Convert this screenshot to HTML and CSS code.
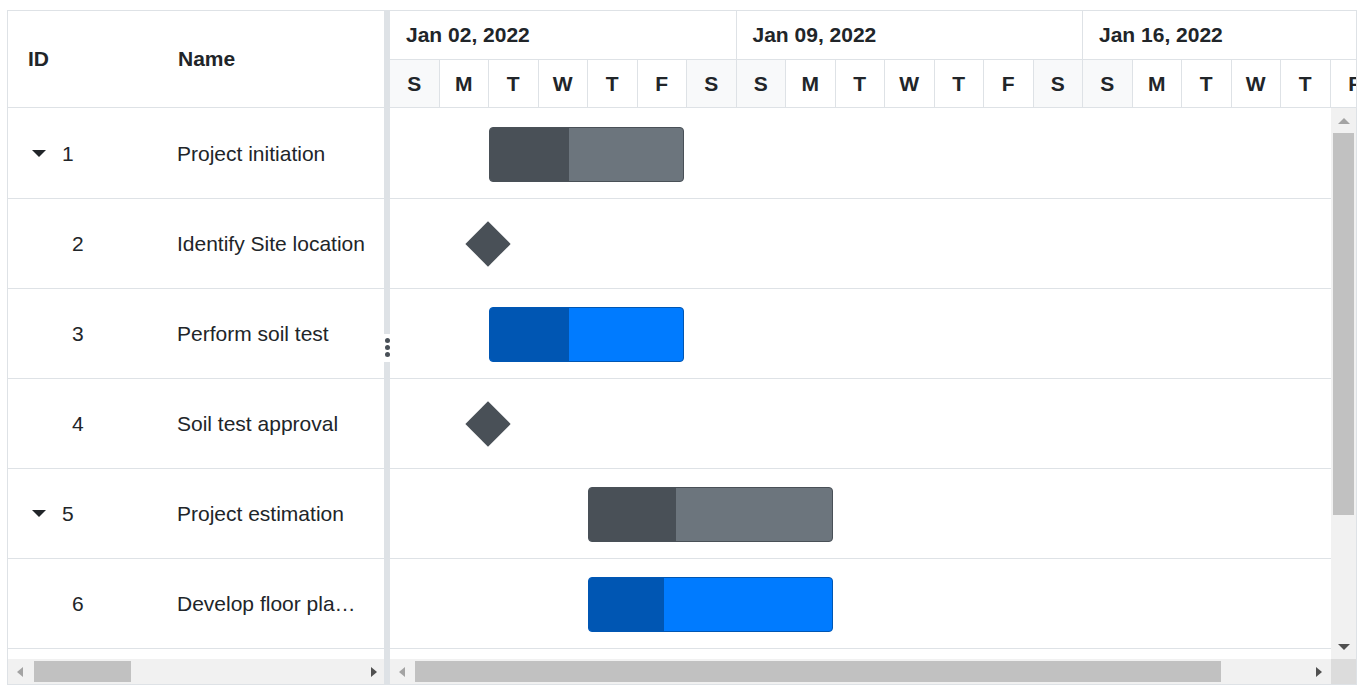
FILE: index.html
```html
<!DOCTYPE html>
<html lang="en">

<head>
  <meta charset="UTF-8" />
  <meta name="viewport" content="width=device-width, initial-scale=1.0" />
  <title>Project Gantt</title>
  <link rel="stylesheet" href="styles.css">
</head>

<body>
  <div class="gantt">
    <!-- tree grid -->
    <div class="grid">
      <div class="grid-head">
        <div class="col-id">ID</div>
        <div class="col-name">Name</div>
      </div>
      <div class="grid-body">
        <div class="row">
          <div class="cell-id parent"><span class="caret"></span>1</div>
          <div class="cell-name">Project initiation</div>
        </div>
        <div class="row">
          <div class="cell-id child">2</div>
          <div class="cell-name">Identify Site location</div>
        </div>
        <div class="row">
          <div class="cell-id child">3</div>
          <div class="cell-name">Perform soil test</div>
        </div>
        <div class="row">
          <div class="cell-id child">4</div>
          <div class="cell-name">Soil test approval</div>
        </div>
        <div class="row">
          <div class="cell-id parent"><span class="caret"></span>5</div>
          <div class="cell-name">Project estimation</div>
        </div>
        <div class="row">
          <div class="cell-id child">6</div>
          <div class="cell-name">Develop floor plan for estimation</div>
        </div>
      </div>
      <div class="hscroll grid-scroll">
        <span class="arrow-left"></span>
        <span class="thumb"></span>
        <span class="spacer"></span>
        <span class="arrow-right"></span>
      </div>
    </div>

    <div class="splitter">
      <div class="grip">
        <span class="dot"></span>
        <span class="dot"></span>
        <span class="dot"></span>
      </div>
    </div>

    <!-- chart side -->
    <div class="chart">
      <div class="timeline">
        <div class="weeks">
          <div class="week">Jan 02, 2022</div>
          <div class="week">Jan 09, 2022</div>
          <div class="week">Jan 16, 2022</div>
        </div>
        <div class="days">
          <div class="day weekend">S</div>
          <div class="day">M</div>
          <div class="day">T</div>
          <div class="day">W</div>
          <div class="day">T</div>
          <div class="day">F</div>
          <div class="day weekend">S</div>
          <div class="day weekend">S</div>
          <div class="day">M</div>
          <div class="day">T</div>
          <div class="day">W</div>
          <div class="day">T</div>
          <div class="day">F</div>
          <div class="day weekend">S</div>
          <div class="day weekend">S</div>
          <div class="day">M</div>
          <div class="day">T</div>
          <div class="day">W</div>
          <div class="day">T</div>
          <div class="day">F</div>
          <div class="day weekend">S</div>
        </div>
      </div>

      <div class="chart-body">
        <div class="chart-rows">
          <div class="chart-row">
            <div class="bar parent-bar" style="margin-left: 99px; width: 195px;">
              <div class="progress" style="width: 79px;"></div>
            </div>
          </div>
          <div class="chart-row">
            <div class="milestone" style="margin-left: 82px;"></div>
          </div>
          <div class="chart-row">
            <div class="bar task-bar" style="margin-left: 99px; width: 195px;">
              <div class="progress" style="width: 79px;"></div>
            </div>
          </div>
          <div class="chart-row">
            <div class="milestone" style="margin-left: 82px;"></div>
          </div>
          <div class="chart-row">
            <div class="bar parent-bar" style="margin-left: 198px; width: 245px;">
              <div class="progress" style="width: 87px;"></div>
            </div>
          </div>
          <div class="chart-row">
            <div class="bar task-bar" style="margin-left: 198px; width: 245px;">
              <div class="progress" style="width: 75px;"></div>
            </div>
          </div>
        </div>
        <div class="vscroll">
          <span class="arrow-up"></span>
          <span class="vthumb"></span>
          <span class="spacer"></span>
          <span class="arrow-down"></span>
        </div>
      </div>

      <div class="chart-foot">
        <div class="hscroll chart-scroll">
          <span class="arrow-left"></span>
          <span class="thumb"></span>
          <span class="spacer"></span>
          <span class="arrow-right"></span>
        </div>
        <div class="corner"></div>
      </div>
    </div>
  </div>
</body>

</html>
```

FILE: styles.css
```css
* {
  box-sizing: border-box;
  margin: 0;
  padding: 0;
}

body {
  padding: 10px 0 0 7px;
  font-family: 'Liberation Sans', Arial, Helvetica, sans-serif;
  color: #212529;
  background-color: #fff;
}

.gantt {
  display: flex;
  width: 1350px;
  height: 675px;
  border: 1px solid #dee2e6;
  overflow: hidden;
}

/* tree grid */

.grid {
  width: 376px;
  flex-shrink: 0;
  display: flex;
  flex-direction: column;
}

.grid-head {
  height: 97px;
  flex-shrink: 0;
  display: flex;
  align-items: center;
  border-bottom: 1px solid #dee2e6;
  font-size: 21px;
  font-weight: bold;
}

.col-id {
  width: 150px;
  padding-left: 20px;
}

.col-name {
  padding-left: 20px;
}

.grid-body {
  flex: 1;
  overflow: hidden;
}

.row {
  height: 90px;
  display: flex;
  align-items: center;
  border-bottom: 1px solid #dee2e6;
  font-size: 21px;
}

.row:first-child,
.chart-row:first-child {
  height: 91px;
  padding-top: 1px;
}

.cell-id {
  width: 150px;
  flex-shrink: 0;
  display: flex;
  align-items: center;
}

.cell-id.parent {
  padding-left: 24px;
}

.cell-id.child {
  padding-left: 64px;
}

.caret {
  width: 0;
  height: 0;
  border-left: 7px solid transparent;
  border-right: 7px solid transparent;
  border-top: 7px solid #212529;
  margin-right: 16px;
}

.cell-name {
  width: 226px;
  padding: 0 17px 0 19px;
  white-space: nowrap;
  overflow: hidden;
  text-overflow: ellipsis;
}

/* splitter */

.splitter {
  width: 6px;
  flex-shrink: 0;
  background-color: #dee2e6;
  display: flex;
  align-items: center;
}

.grip {
  width: 6px;
  height: 28px;
  background-color: #fff;
  display: flex;
  flex-direction: column;
  align-items: center;
  justify-content: center;
  gap: 2px;
}

.dot {
  width: 5px;
  height: 5px;
  border-radius: 50%;
  background-color: #495057;
}

/* chart */

.chart {
  flex: 1;
  min-width: 0;
  display: flex;
  flex-direction: column;
}

.timeline {
  height: 97px;
  flex-shrink: 0;
  overflow: hidden;
  border-bottom: 1px solid #dee2e6;
  font-size: 21px;
  font-weight: bold;
}

.weeks {
  display: flex;
  height: 49px;
  border-bottom: 1px solid #dee2e6;
}

.week {
  width: 346.5px;
  flex-shrink: 0;
  padding-left: 16px;
  display: flex;
  align-items: center;
  border-right: 1px solid #dee2e6;
  white-space: nowrap;
}

.days {
  display: flex;
  height: 47px;
}

.day {
  width: 49.5px;
  flex-shrink: 0;
  display: flex;
  align-items: center;
  justify-content: center;
  border-right: 1px solid #dee2e6;
}

.day.weekend {
  background-color: #f8f9fa;
}

.chart-body {
  flex: 1;
  display: flex;
  min-height: 0;
}

.chart-rows {
  flex: 1;
  overflow: hidden;
}

.chart-row {
  height: 90px;
  display: flex;
  align-items: flex-start;
  border-bottom: 1px solid #dee2e6;
}

.bar {
  height: 55px;
  margin-top: 18px;
  border-radius: 4px;
  display: flex;
  overflow: hidden;
}

.progress {
  height: 100%;
}

.parent-bar {
  background-color: #6c757d;
  border: 1px solid #495057;
}

.parent-bar .progress {
  background-color: #495057;
}

.task-bar {
  background-color: #007bff;
  border: 1px solid #0056b3;
}

.task-bar .progress {
  background-color: #0056b3;
}

.milestone {
  width: 32px;
  height: 32px;
  margin-top: 29px;
  background-color: #495057;
  transform: rotate(45deg);
}

/* scrollbars */

.hscroll {
  height: 25px;
  display: flex;
  align-items: center;
  background-color: #f1f1f1;
}

.grid-scroll {
  flex-shrink: 0;
}

.chart-foot {
  height: 25px;
  flex-shrink: 0;
  display: flex;
}

.chart-scroll {
  flex: 1;
}

.corner {
  width: 25px;
  background-color: #dcdcdc;
}

.spacer {
  flex: 1;
}

.arrow-left {
  width: 0;
  height: 0;
  margin-left: 9px;
  border-top: 5px solid transparent;
  border-bottom: 5px solid transparent;
  border-right: 6px solid #a3a3a3;
}

.arrow-right {
  width: 0;
  height: 0;
  border-top: 5px solid transparent;
  border-bottom: 5px solid transparent;
  border-left: 6px solid #505050;
}

.thumb {
  height: 21px;
  background-color: #c1c1c1;
}

.grid-scroll .thumb {
  width: 97px;
  margin-left: 11px;
}

.grid-scroll .arrow-right {
  margin-right: 7px;
}

.chart-scroll .thumb {
  width: 806px;
  margin-left: 10px;
}

.chart-scroll .arrow-right {
  margin-right: 9px;
}

.vscroll {
  width: 25px;
  flex-shrink: 0;
  display: flex;
  flex-direction: column;
  align-items: center;
  background-color: #f1f1f1;
}

.arrow-up {
  width: 0;
  height: 0;
  margin-top: 10px;
  border-left: 6px solid transparent;
  border-right: 6px solid transparent;
  border-bottom: 6px solid #a3a3a3;
}

.vthumb {
  width: 21px;
  height: 382px;
  margin-top: 9px;
  background-color: #c1c1c1;
}

.arrow-down {
  width: 0;
  height: 0;
  margin-bottom: 9px;
  border-left: 6px solid transparent;
  border-right: 6px solid transparent;
  border-top: 6px solid #505050;
}
```
